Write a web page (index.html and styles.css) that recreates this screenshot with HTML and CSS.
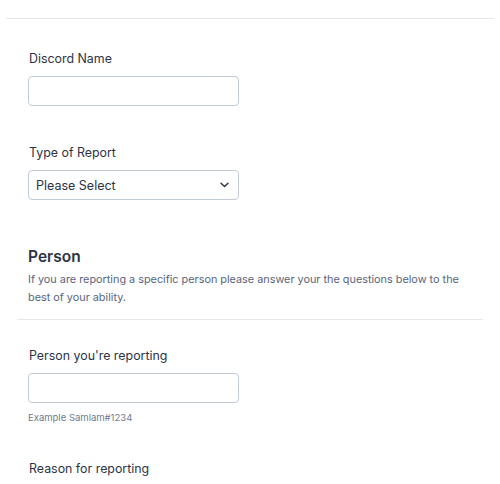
FILE: index.html
```html
<!DOCTYPE html>
<html>
<head>
<meta charset="utf-8">
<link rel="stylesheet" href="styles.css">
</head>
<body>
<div class="page">
  <div class="rule rule-top"></div>

  <div class="field field-first">
    <label class="label">Discord Name</label>
    <div class="input"></div>
  </div>

  <div class="field field-gap">
    <label class="label">Type of Report</label>
    <div class="input select">
      <span class="select-text">Please Select</span>
      <svg class="chev" width="9" height="6" viewBox="0 0 9 6"><path d="M1 1.2 L4.5 4.6 L8 1.2" fill="none" stroke="#2c3345" stroke-width="1.4" stroke-linecap="round" stroke-linejoin="round"/></svg>
    </div>
  </div>

  <div class="section">
    <h2 class="heading">Person</h2>
    <p class="desc">If you are reporting a specific person please answer your the questions below to the best of your ability.</p>
  </div>

  <div class="rule rule-mid"></div>

  <div class="field field-after-rule">
    <label class="label">Person you're reporting</label>
    <div class="input"></div>
    <div class="hint">Example Samlam#1234</div>
  </div>

  <div class="field field-gap2">
    <label class="label">Reason for reporting</label>
  </div>
</div>
</body>
</html>
```
FILE: styles.css
```css
html, body {
  margin: 0;
  padding: 0;
  background: #ffffff;
}
body {
  font-family: Inter, "Noto Sans", sans-serif;
  color: #2c3345;
  width: 500px;
  height: 484px;
  overflow: hidden;
}
.page {
  padding-top: 18px;
}
.rule {
  height: 1px;
  background: #e6e8ee;
}
.rule-top {
  margin: 0 6px;
}
.rule-mid {
  margin: 13px 17px 0;
}
.field {
  padding: 0 28px;
  display: flex;
  flex-direction: column;
  align-items: flex-start;
}
.field-first {
  margin-top: 31px;
}
.field-gap {
  margin-top: 38px;
}
.field-after-rule {
  margin-top: 27px;
}
.field-gap2 {
  margin-top: 35px;
}
.label {
  font-size: 12.4px;
  line-height: 18px;
  font-weight: 400;
  color: #2c3345;
  margin-bottom: 8px;
  padding-left: 1px;
}
.input {
  box-sizing: border-box;
  width: 211px;
  height: 30px;
  border: 1px solid #c3cad8;
  border-radius: 4px;
  background: #fff;
}
.select {
  display: flex;
  align-items: center;
  justify-content: space-between;
  padding: 0 8px 0 7px;
}
.select-text {
  font-size: 12.5px;
  color: #2c3345;
}
.chev {
  display: block;
  margin-right: 1px;
}
.section {
  padding: 0 28px;
  margin-top: 46px;
}
.heading {
  margin: 0;
  font-size: 15.5px;
  line-height: 22px;
  font-weight: 600;
  color: #2c3345;
}
.desc {
  margin: 2px 0 0;
  font-size: 10.85px;
  line-height: 18px;
  color: #57647e;
}
.hint {
  margin-top: 8px;
  font-size: 9.5px;
  line-height: 14px;
  color: #6f7a92;
}
```
